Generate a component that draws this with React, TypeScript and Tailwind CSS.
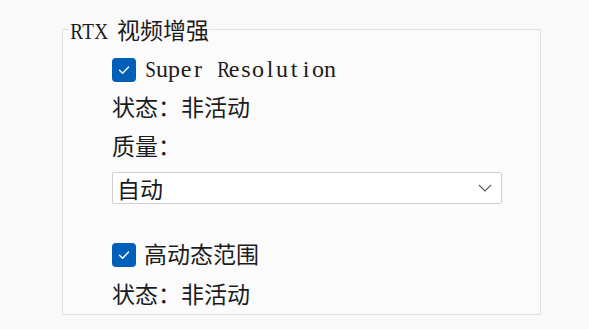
import React from 'react';

const cjk = "font-['Noto_Sans_CJK_SC',sans-serif] text-[23px]";

// half-width serif letters, one 12px cell each (like the UI's SimSun Latin)
function Mono({ text }: { text: string }) {
  return (
    <span className="font-['Liberation_Serif',serif] text-[24px] leading-6">
      {text.split('').map((c, i) => (
        <span
          key={i}
          className={
            c >= 'A' && c <= 'Z'
              ? 'inline-block w-[12px] text-center scale-x-[0.8]'
              : 'inline-block w-[12px] text-center'
          }
        >
          {c === ' ' ? '\u00a0' : c}
        </span>
      ))}
    </span>
  );
}

function Check({ label }: { label: React.ReactNode }) {
  return (
    <div className="flex items-center h-6">
      <span className="w-6 h-6 rounded-[4px] bg-[#005fb8] flex items-center justify-center shrink-0">
        <svg width="24" height="24" viewBox="0 0 24 24" fill="none">
          <path d="M7.5 12.2 L10.6 15.2 L16.6 9" stroke="white" strokeWidth="1.4" strokeLinecap="round" strokeLinejoin="round" />
        </svg>
      </span>
      <span className="ml-[8px] leading-6">{label}</span>
    </div>
  );
}

export default function App() {
  return (
    <div className="w-[589px] h-[329px] bg-[#f9f9f9] text-[#1b1b1b] pt-[17px] pl-[62px]">
      <fieldset className="w-[479px] border border-[#e0e0e0] bg-[#fbfbfb] pb-[9px]">
        <legend className="ml-[6px] leading-6 h-6">
          <Mono text="RTX " />
          <span className={cjk}>视频增强</span>
        </legend>
        <div className="flex flex-col pl-[49px]">
          <div className="mt-[17px]">
            <Check label={<Mono text="Super Resolution" />} />
          </div>
          <div className={`mt-[12px] leading-6 h-6 ${cjk}`}>状态：非活动</div>
          <div className={`mt-[15px] leading-6 h-6 ${cjk}`}>质量：</div>
          <div className="mt-[15px] w-[390px] h-[32px] bg-white border border-[#d0d0d0] rounded-[2px] flex items-center justify-between pl-[4px] pr-[9px]">
            <span className={`leading-6 ${cjk}`}>自动</span>
            <svg width="14" height="8" viewBox="0 0 14 8" fill="none">
              <path d="M1 1 L7 7 L13 1" stroke="#5a5a5a" strokeWidth="1.1" />
            </svg>
          </div>
          <div className="mt-[39px]">
            <Check label={<span className={cjk}>高动态范围</span>} />
          </div>
          <div className={`mt-[14px] leading-6 h-6 ${cjk}`}>状态：非活动</div>
        </div>
      </fieldset>
    </div>
  );
}
